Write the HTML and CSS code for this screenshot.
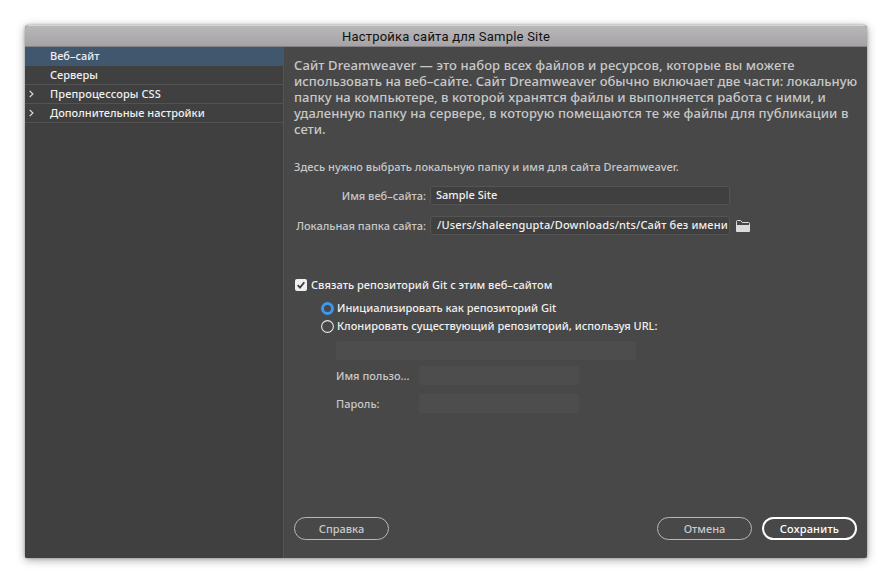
FILE: index.html
```html
<!DOCTYPE html>
<html lang="ru">

<head>
    <meta charset="UTF-8">
    <meta name="viewport" content="width=device-width, initial-scale=1.0">
    <title>Настройка сайта для Sample Site</title>
    <link rel="stylesheet" href="styles.css">
</head>

<body>

    <div class="window">
        <div class="titlebar">Настройка сайта для Sample Site</div>
        <div class="main">
            <ul class="sidebar">
                <li class="active"><span class="arrow"></span><span>Веб–сайт</span></li>
                <li><span class="arrow"></span><span>Серверы</span></li>
                <li>
                    <span class="arrow"><svg width="5" height="8" viewBox="0 0 5 8"><path d="M0.7 0.8L3.9 4L0.7 7.2"/></svg></span>
                    <span class="cat-css">Препроцессоры CSS</span>
                </li>
                <li>
                    <span class="arrow"><svg width="5" height="8" viewBox="0 0 5 8"><path d="M0.7 0.8L3.9 4L0.7 7.2"/></svg></span>
                    <span>Дополнительные настройки</span>
                </li>
            </ul>

            <form class="content">
                <div class="intro">
                    <div class="wide">Сайт Dreamweaver — это набор всех файлов и ресурсов, которые вы можете</div>
                    <div>использовать на веб–сайте. Сайт Dreamweaver обычно включает две части: локальную</div>
                    <div class="medium">папку на компьютере, в которой хранятся файлы и выполняется работа с ними, и</div>
                    <div class="wide">удаленную папку на сервере, в которую помещаются те же файлы для публикации в</div>
                    <div>сети.</div>
                </div>
                <p class="hint">Здесь нужно выбрать локальную папку и имя для сайта Dreamweaver.</p>

                <div class="row">
                    <label for="siteName">Имя веб–сайта:</label>
                    <input type="text" id="siteName" value="Sample Site">
                </div>
                <div class="row">
                    <label for="siteFolder">Локальная папка сайта:</label>
                    <input type="text" id="siteFolder" value="/Users/shaleengupta/Downloads/nts/Сайт без имени">
                    <svg class="folder" width="14" height="12" viewBox="0 0 14 12">
                        <path class="folder-back" d="M0.5 5V1.5Q0.5 0.5 1.5 0.5H4.6L6.2 2.5H12.5Q13.5 2.5 13.5 3.5V5"/>
                        <path class="folder-front" d="M0 5H14V11Q14 12 13 12H1Q0 12 0 11Z"/>
                    </svg>
                </div>

                <label class="check">
                    <svg width="12" height="12" viewBox="0 0 12 12">
                        <rect width="12" height="12" rx="2" fill="#f0f0f0"/>
                        <path d="M2.7 6.2L5 8.6L9.3 3.3" fill="none" stroke="#3c3c3c" stroke-width="1.8"/>
                    </svg>
                    <span>Связать репозиторий Git с этим веб–сайтом</span>
                </label>

                <div class="git">
                    <label class="option">
                        <svg width="13" height="13" viewBox="0 0 13 13"><circle cx="6.5" cy="6.5" r="5" fill="none" stroke="#3b98f3" stroke-width="3"/></svg>
                        <span>Инициализировать как репозиторий Git</span>
                    </label>
                    <label class="option">
                        <svg width="13" height="13" viewBox="0 0 13 13"><circle cx="6.5" cy="6.5" r="5.9" fill="none" stroke="#e6e6e6" stroke-width="1.1"/></svg>
                        <span>Клонировать существующий репозиторий, используя URL:</span>
                    </label>
                    <input type="text" class="url" disabled>
                    <div class="cred">
                        <span>Имя пользо...</span>
                        <input type="text" disabled>
                    </div>
                    <div class="cred">
                        <span>Пароль:</span>
                        <input type="password" disabled>
                    </div>
                </div>

                <div class="buttons">
                    <button type="button" class="help">Справка</button>
                    <button type="button">Отмена</button>
                    <button type="button" class="save">Сохранить</button>
                </div>
            </form>
        </div>
    </div>

</body>

</html>
```
FILE: styles.css
```css
body {
    margin: 0;
    padding: 25px;
    background-color: #fff;
    font-family: "Noto Sans", "Open Sans", sans-serif;
    font-size: 11px;
    font-weight: 500;
    color: #c8c8c8;
}

* {
    box-sizing: border-box;
}

.window {
    width: 842px;
    height: 533px;
    border-radius: 4px 4px 2px 2px;
    background-color: #484848;
    box-shadow: 0 0 3px rgba(0, 0, 0, 0.3), 0 2px 10px rgba(0, 0, 0, 0.35);
    overflow: hidden;
    white-space: nowrap;
}

.titlebar {
    height: 22px;
    border-top: 1px solid #d8d8d8;
    border-bottom: 1px solid #858385;
    background: linear-gradient(#b9b7b9, #a5a3a5);
    color: #111;
    font-family: Roboto, sans-serif;
    font-size: 13px;
    font-weight: 400;
    letter-spacing: 0.22px;
    line-height: 21px;
    text-align: center;
}

.main {
    display: flex;
    height: 511px;
}

.sidebar {
    flex: none;
    width: 259px;
    margin: 0;
    padding: 0;
    list-style: none;
    background-color: #404040;
    border-right: 1px solid #545454;
    color: #f0f0f0;
}

.sidebar li {
    display: flex;
    align-items: center;
    height: 19px;
    border-bottom: 1px solid #535353;
}

.sidebar li span:last-child {
    padding-bottom: 2px;
}

.sidebar li.active {
    background-color: #41576d;
}

.cat-css {
    letter-spacing: 0.1px;
}

.arrow {
    display: flex;
    width: 25px;
    padding-left: 4px;
}

.arrow path {
    fill: none;
    stroke: #dcdcdc;
    stroke-width: 1.2;
}

.content {
    flex: 1;
    display: flex;
    flex-direction: column;
    min-width: 0;
    padding: 10px 10px 18px;
}

.intro {
    font-size: 13px;
    line-height: 16px;
    letter-spacing: -0.01px;
}

.intro .wide {
    letter-spacing: 0.1px;
}

.intro .medium {
    letter-spacing: 0.04px;
}

.hint {
    margin: 22px 0 11px;
    line-height: 16px;
    letter-spacing: 0.02px;
}

.row {
    display: flex;
    align-items: center;
    height: 19px;
    margin-bottom: 11px;
}

.row label {
    width: 132px;
    margin-right: 4px;
    text-align: right;
}

input {
    height: 19px;
    margin: 0;
    padding: 0 5px 2px;
    border: 1px solid #545454;
    border-radius: 2px;
    background-color: #404040;
    color: #f0f0f0;
    font: inherit;
}

.row input {
    width: 300px;
}

#siteFolder {
    padding: 0 0 2px 6px;
    letter-spacing: 0.16px;
}

input:disabled {
    border-color: #4d4d4d;
    background-color: #4d4d4d;
}

.folder {
    margin-left: 6px;
}

.folder-back {
    fill: none;
    stroke: #dcdcdc;
}

.folder-front {
    fill: #dcdcdc;
}

.check {
    display: flex;
    align-items: center;
    height: 16px;
    margin-top: 31px;
    padding-left: 1px;
    gap: 4px;
    color: #f0f0f0;
    letter-spacing: 0.05px;
}

.check span,
.option span {
    padding-bottom: 2px;
}

.git {
    padding: 6px 0 0 27px;
}

.option {
    display: flex;
    align-items: center;
    height: 18px;
    gap: 3px;
    color: #f0f0f0;
}

.url {
    display: block;
    width: 300px;
    margin: 6px 0 6px 15px;
}

.cred {
    display: flex;
    align-items: center;
    height: 19px;
    margin: 0 0 9px 15px;
}

.cred span {
    width: 83px;
}

.cred input {
    width: 160px;
}

.buttons {
    display: flex;
    gap: 10px;
    margin-top: auto;
}

button {
    width: 95px;
    height: 23px;
    padding: 0;
    border: 1px solid #b8b8b8;
    border-radius: 12px;
    background: none;
    color: #c8c8c8;
    font: inherit;
}

.help {
    margin-right: auto;
}

.save {
    border: 2px solid #fff;
    color: #fff;
    letter-spacing: 0.2px;
}
```
